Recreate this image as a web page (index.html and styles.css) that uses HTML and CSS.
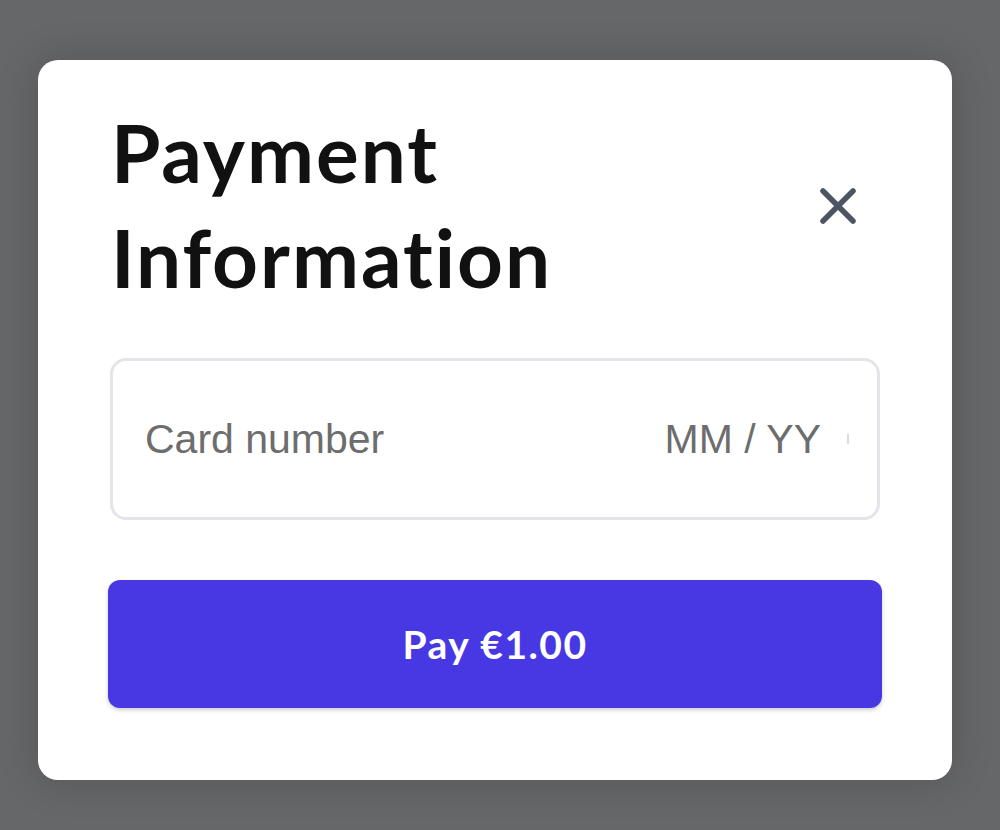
FILE: index.html
```html
<!DOCTYPE html>
<html>
    <head>
        <title>Payment Information</title>
        <link rel="stylesheet" href="styles.css">
    </head>
    <body>
        <div class="modal">
            <div class="modal-header">
                <h1>Payment<br>Information</h1>
                <button class="close-button" aria-label="Close">
                    <svg viewBox="0 0 38 38" xmlns="http://www.w3.org/2000/svg">
                        <path d="M4 4L34 34M34 4L4 34"/>
                    </svg>
                </button>
            </div>
            <div class="card-field">
                <span class="card-number">Card number</span>
                <span class="card-expiry">MM / YY</span>
                <span class="card-cvc"></span>
            </div>
            <button class="pay-button">Pay €1.00</button>
        </div>
    </body>
</html>
```

FILE: styles.css
```css
body {
    margin: 0;
    height: 830px;
    padding: 60px 48px 0 38px;
    box-sizing: border-box;
    background: #666769;
    font-family: Lato, "Liberation Sans", sans-serif;
}

.modal {
    width: 914px;
    box-sizing: border-box;
    padding: 40px 72px 72px 72px;
    background: #ffffff;
    border-radius: 20px;
    box-shadow: 0 0 40px rgba(0, 0, 0, 0.18);
}

.modal-header {
    display: flex;
    align-items: center;
    justify-content: space-between;
}

h1 {
    margin: 0 0 0 1px;
    font-size: 80px;
    line-height: 105px;
    font-weight: 700;
    letter-spacing: 2px;
    font-variant-ligatures: none;
    color: #111111;
}

.close-button {
    border: none;
    background: none;
    padding: 0;
    margin: 2px 23px 0 0;
    width: 38px;
    height: 38px;
    cursor: pointer;
}

.close-button svg {
    width: 38px;
    height: 38px;
    stroke: #4b5563;
    stroke-width: 5.5;
    stroke-linecap: round;
    fill: none;
}

.card-field {
    display: flex;
    align-items: center;
    height: 162px;
    box-sizing: border-box;
    margin-top: 48px;
    padding: 0 0 0 32px;
    border: 3px solid #e3e5ea;
    border-radius: 16px;
    font-family: "Liberation Sans", Arial, sans-serif;
    font-size: 41px;
    color: #6d6d6d;
}

.card-number {
    flex: 1;
}

.card-cvc {
    width: 2px;
    height: 10px;
    margin: 0 28px 0 26px;
    background: #dcdcdc;
}

.pay-button {
    display: block;
    width: 774px;
    height: 128px;
    margin: 60px -2px 0 -2px;
    border: none;
    border-radius: 12px;
    background: #4838e4;
    color: #ffffff;
    font-family: Lato, "Liberation Sans", sans-serif;
    font-size: 39px;
    font-weight: 700;
    letter-spacing: 1.5px;
    box-shadow: 0 2px 4px rgba(0, 0, 0, 0.2);
    cursor: pointer;
}
```
